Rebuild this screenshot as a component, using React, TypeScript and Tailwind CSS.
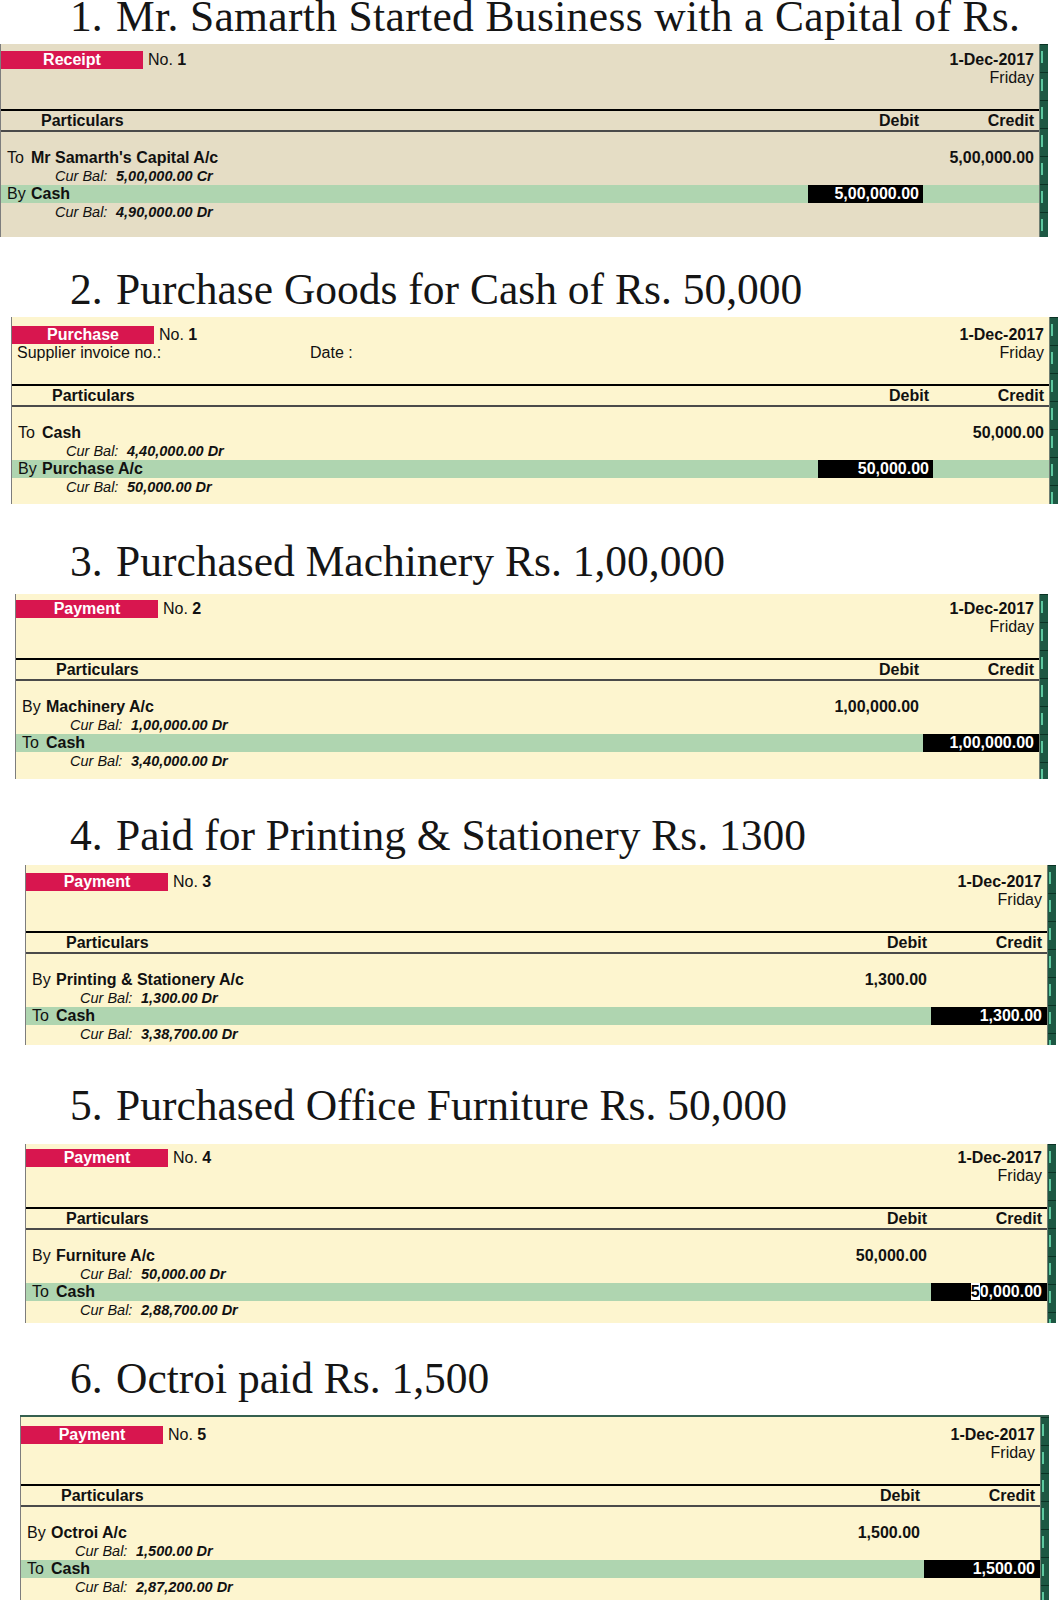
import React from "react";

type Entry = {
  prefix: "To" | "By";
  name: string;
  bal: string;
  debit?: string;
  credit?: string;
};

type Voucher = {
  n: number;
  title: string;
  titleCls: string; // height + padding that puts the baseline over the panel
  trackCls?: string;
  boxCls: string; // left offset + width of the panel
  padCls: string; // top / bottom padding inside the panel
  bg: string;
  kind: string;
  no: string;
  supplier?: boolean;
  topLine?: boolean;
  first: Entry;
  second: Entry; // the highlighted (green) row
  hi: "debit" | "credit";
  cursor?: boolean;
};

const vouchers: Voucher[] = [
  {
    n: 1,
    title: "Mr. Samarth Started Business with a Capital of Rs.",
    titleCls: "h-[44px] pb-[6px]",
    trackCls: "tracking-[0.35px]",
    boxCls: "ml-[0px] w-[1048px]",
    padCls: "pt-[7px] pb-[16px]",
    bg: "bg-[#e5ddc5]",
    kind: "Receipt",
    no: "1",
    first: { prefix: "To", name: "Mr Samarth's Capital A/c", bal: "5,00,000.00 Cr", credit: "5,00,000.00" },
    second: { prefix: "By", name: "Cash", bal: "4,90,000.00 Dr", debit: "5,00,000.00" },
    hi: "debit",
  },
  {
    n: 2,
    title: "Purchase Goods for Cash of Rs. 50,000",
    titleCls: "h-[80px] pb-[6px]",
    boxCls: "ml-[11px] w-[1047px]",
    padCls: "pt-[9px] pb-[8px]",
    bg: "bg-[#fdf5cf]",
    kind: "Purchase",
    no: "1",
    supplier: true,
    first: { prefix: "To", name: "Cash", bal: "4,40,000.00 Dr", credit: "50,000.00" },
    second: { prefix: "By", name: "Purchase A/c", bal: "50,000.00 Dr", debit: "50,000.00" },
    hi: "debit",
  },
  {
    n: 3,
    title: "Purchased Machinery Rs. 1,00,000",
    titleCls: "h-[90px] pb-[11px]",
    boxCls: "ml-[15px] w-[1033px]",
    padCls: "pt-[6px] pb-[9px]",
    bg: "bg-[#fdf5cf]",
    kind: "Payment",
    no: "2",
    first: { prefix: "By", name: "Machinery A/c", bal: "1,00,000.00 Dr", debit: "1,00,000.00" },
    second: { prefix: "To", name: "Cash", bal: "3,40,000.00 Dr", credit: "1,00,000.00" },
    hi: "credit",
  },
  {
    n: 4,
    title: "Paid for Printing & Stationery Rs. 1300",
    titleCls: "h-[86px] pb-[8px]",
    boxCls: "ml-[25px] w-[1031px]",
    padCls: "pt-[8px] pb-[2px]",
    bg: "bg-[#fdf5cf]",
    kind: "Payment",
    no: "3",
    first: { prefix: "By", name: "Printing & Stationery A/c", bal: "1,300.00 Dr", debit: "1,300.00" },
    second: { prefix: "To", name: "Cash", bal: "3,38,700.00 Dr", credit: "1,300.00" },
    hi: "credit",
  },
  {
    n: 5,
    title: "Purchased Office Furniture Rs. 50,000",
    titleCls: "h-[99px] pb-[17px]",
    boxCls: "ml-[25px] w-[1031px]",
    padCls: "pt-[5px] pb-[4px]",
    bg: "bg-[#fdf5cf]",
    kind: "Payment",
    no: "4",
    first: { prefix: "By", name: "Furniture A/c", bal: "50,000.00 Dr", debit: "50,000.00" },
    second: { prefix: "To", name: "Cash", bal: "2,88,700.00 Dr", credit: "50,000.00" },
    hi: "credit",
    cursor: true,
  },
  {
    n: 6,
    title: "Octroi paid Rs. 1,500",
    titleCls: "h-[92px] pb-[15px]",
    boxCls: "ml-[20px] w-[1029px]",
    padCls: "pt-[9px] pb-[20px]",
    bg: "bg-[#fdf5cf]",
    kind: "Payment",
    no: "5",
    topLine: true,
    first: { prefix: "By", name: "Octroi A/c", bal: "1,500.00 Dr", debit: "1,500.00" },
    second: { prefix: "To", name: "Cash", bal: "2,87,200.00 Dr", credit: "1,500.00" },
    hi: "credit",
  },
];

// Tally's button bar on the right edge; contain:size keeps it from growing the panel
function ButtonBar() {
  return (
    <div className="flex w-[9px] shrink-0 flex-col overflow-hidden border-l border-[#6f7d72] bg-[#1d5843] [contain:size]">
      {Array.from({ length: 8 }).map((_, i) => (
        <div key={i} className="h-[28px] shrink-0 border-t border-[#0b3325] pl-[1px] pt-[6px]">
          <div className="h-[12px] w-[2px] bg-[#5cc79e]" />
        </div>
      ))}
    </div>
  );
}

function Amount({ value, cursor }: { value: string; cursor?: boolean }) {
  if (!cursor) return <>{value}</>;
  return (
    <>
      <span className="bg-white text-black">{value.slice(0, 1)}</span>
      {value.slice(1)}
    </>
  );
}

function EntryRows({ entry, green, hi, cursor }: { entry: Entry; green?: boolean; hi?: "debit" | "credit"; cursor?: boolean }) {
  return (
    <>
      <div className={`flex h-[18px] items-center leading-[18px] ${green ? "bg-[#afd5b0]" : ""}`}>
        <span className="w-[30px] shrink-0 pl-[6px]">{entry.prefix}</span>
        <span className="flex-1 font-bold">{entry.name}</span>
        <span
          className={`h-[18px] w-[115px] shrink-0 pr-[4px] text-right font-bold ${
            hi === "debit" ? "bg-black text-white" : ""
          }`}
        >
          {entry.debit}
        </span>
        <span
          className={`h-[18px] w-[116px] shrink-0 pr-[5px] text-right font-bold ${
            hi === "credit" ? "bg-black text-white" : ""
          }`}
        >
          {entry.credit && <Amount value={entry.credit} cursor={hi === "credit" && cursor} />}
        </span>
      </div>
      <div className="flex h-[18px] items-center pl-[54px] text-[14.5px] italic leading-[18px]">
        <span className="w-[61px] shrink-0">Cur Bal:</span>
        <span className="font-bold">{entry.bal}</span>
      </div>
    </>
  );
}

function VoucherPanel({ v }: { v: Voucher }) {
  return (
    <section>
      <div
        className={`flex items-end pl-[70px] font-['Liberation_Serif',serif] text-[43.5px] leading-none text-[#151515] ${v.titleCls}`}
      >
        <span className="w-[46px] shrink-0">{v.n}.</span>
        <span className={`whitespace-nowrap ${v.trackCls ?? ""}`}>{v.title}</span>
      </div>

      <div className={`flex ${v.boxCls} ${v.topLine ? "border-t-2 border-[#35604f]" : ""}`}>
        <div className={`flex-1 border-l border-[#7d7d7d] text-[#111] ${v.bg} ${v.padCls}`}>
          {/* voucher type + date */}
          <div className="flex h-[18px] items-center leading-[18px]">
            <div className="flex h-[18px] w-[142px] items-center justify-center bg-[#d8164f] font-bold text-white">
              {v.kind}
            </div>
            <span className="ml-[5px]">
              No. <b>{v.no}</b>
            </span>
            <span className="ml-auto pr-[5px] font-bold">1-Dec-2017</span>
          </div>
          <div className="flex h-[18px] items-center leading-[18px]">
            {v.supplier && (
              <>
                <span className="w-[298px] shrink-0 pl-[5px]">Supplier invoice no.:</span>
                <span>Date :</span>
              </>
            )}
            <span className="ml-auto pr-[5px]">Friday</span>
          </div>
          <div className="h-[22px]" />

          {/* column header */}
          <div className="flex h-[23px] items-center border-y-2 border-t-black border-b-[#4a4a4a] font-bold leading-[19px]">
            <span className="flex-1 pl-[40px]">Particulars</span>
            <span className="w-[115px] shrink-0 pr-[4px] text-right">Debit</span>
            <span className="w-[116px] shrink-0 pr-[5px] text-right">Credit</span>
          </div>
          <div className="h-[17px]" />

          <EntryRows entry={v.first} />
          <EntryRows entry={v.second} green hi={v.hi} cursor={v.cursor} />
        </div>
        <ButtonBar />
      </div>
    </section>
  );
}

export default function App() {
  return (
    <div className="h-[1600px] w-[1059px] overflow-hidden bg-white font-['Liberation_Sans',Arial,sans-serif] text-[16px]">
      {vouchers.map((v) => (
        <VoucherPanel key={v.n} v={v} />
      ))}
    </div>
  );
}
